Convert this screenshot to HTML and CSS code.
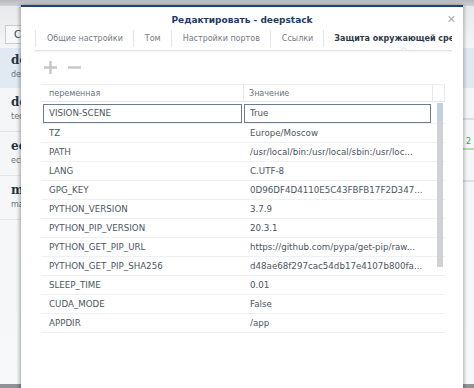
FILE: index.html
```html
<!DOCTYPE html>
<html lang="ru">

<head>
    <meta charset="UTF-8">
    <title>Редактировать - deepstack</title>
    <link rel="stylesheet" href="styles.css">
</head>

<body>
    <div class="desk">
        <div class="topbar"></div>
        <div class="desk-body">
            <div class="list">
                <div class="list-tools"><span class="btn">Создать</span></div>
                <div class="item selected"><b>deepstack</b><small>deepquestai/deepstack</small></div>
                <div class="item"><b>deepstack-gpu</b><small>tecnativa/docker</small></div>
                <div class="item"><b>eclipse</b><small>eclipse-mosquitto</small></div>
                <div class="item"><b>mariadb</b><small>mariadb:latest</small></div>
            </div>
            <div class="side">
                <div class="side-band"></div>
                <div class="side-row"></div>
                <div class="side-row green">2</div>
                <div class="side-row"></div>
            </div>
        </div>
        <div class="taskbar"></div>
    </div>

    <div class="modal">
        <div class="modal-head">
            <span class="modal-title">Редактировать - deepstack</span>
            <span class="close">&#x2715;</span>
        </div>

        <div class="tabs">
            <span class="tab">Общие настройки</span>
            <span class="tab">Том</span>
            <span class="tab">Настройки портов</span>
            <span class="tab">Ссылки</span>
            <span class="tab active">Защита окружающей среды</span>
            <span class="caret"></span>
        </div>

        <div class="toolbar">
            <svg width="15" height="15" viewBox="0 0 15 15"><path d="M7.5 1v13M1 7.5h13" stroke="#c3c7cc" stroke-width="2.4"/></svg>
            <svg width="15" height="15" viewBox="0 0 15 15"><path d="M1 7.5h13" stroke="#c3c7cc" stroke-width="2.4"/></svg>
        </div>

        <div class="grid">
            <div class="grid-head">
                <span>переменная</span>
                <span>Значение</span>
                <span></span>
            </div>
            <div class="grid-body">
                <div class="row edit">
                    <span class="cell"><span class="input">VISION-SCENE</span></span>
                    <span class="cell"><span class="input">True</span></span>
                </div>
                <div class="row"><span class="cell">TZ</span><span class="cell">Europe/Moscow</span></div>
                <div class="row"><span class="cell">PATH</span><span class="cell">/usr/local/bin:/usr/local/sbin:/usr/loc...</span></div>
                <div class="row"><span class="cell">LANG</span><span class="cell">C.UTF-8</span></div>
                <div class="row"><span class="cell">GPG_KEY</span><span class="cell">0D96DF4D4110E5C43FBFB17F2D347...</span></div>
                <div class="row"><span class="cell">PYTHON_VERSION</span><span class="cell">3.7.9</span></div>
                <div class="row"><span class="cell">PYTHON_PIP_VERSION</span><span class="cell">20.3.1</span></div>
                <div class="row"><span class="cell">PYTHON_GET_PIP_URL</span><span class="cell">https://github.com/pypa/get-pip/raw...</span></div>
                <div class="row"><span class="cell">PYTHON_GET_PIP_SHA256</span><span class="cell">d48ae68f297cac54db17e4107b800fa...</span></div>
                <div class="row"><span class="cell">SLEEP_TIME</span><span class="cell">0.01</span></div>
                <div class="row"><span class="cell">CUDA_MODE</span><span class="cell">False</span></div>
                <div class="row"><span class="cell">APPDIR</span><span class="cell">/app</span></div>
                <div class="scrollbar"><div class="thumb-top"></div></div>
            </div>
        </div>
    </div>
</body>

</html>
```

FILE: styles.css
```css
body {
    margin: 0;
    width: 474px;
    height: 388px;
    overflow: hidden;
    position: relative;
    font-family: "DejaVu Sans", Verdana, sans-serif;
    font-size: 8.7px;
    color: #4b5560;
    background-color: #f6f7f8;
}

.desk {
    height: 388px;
    display: flex;
    flex-direction: column;
}

.topbar {
    height: 6px;
    background: linear-gradient(#b7b9bc, #cfd1d3);
}

.desk-body {
    flex: 1;
    display: flex;
    justify-content: space-between;
    background: linear-gradient(#e8e9ea 0, #f4f5f6 40px, #f7f8f9 100%);
}

.taskbar {
    height: 4px;
    background-color: #8f9296;
}

/* list behind the dialog */
.list {
    width: 21px;
    overflow: hidden;
    white-space: nowrap;
}

.list-tools {
    height: 42px;
    padding: 19px 0 0 5px;
    box-sizing: border-box;
}

.btn {
    display: inline-block;
    border: 1px solid #c9cdd2;
    background-color: #f7f8f9;
    padding: 3px 8px;
    color: #3c4650;
    font-size: 10px;
}

.item {
    height: 44px;
    padding: 7px 0 0 11px;
    box-sizing: border-box;
    border-bottom: 1px solid #e2e4e6;
}

.item b {
    display: block;
    font-family: "DejaVu Serif", serif;
    font-size: 12px;
    color: #243447;
}

.item small {
    display: block;
    margin-top: 3px;
    font-size: 8px;
    color: #6b737c;
}

.item.selected {
    height: 40px;
    background-color: #e1e9f3;
    border-bottom: none;
    padding-top: 5px;
}

.side {
    width: 11px;
    padding-top: 42px;
}

.side-band {
    height: 40px;
    background-color: #dfe7f1;
}

.side-row {
    height: 30px;
    border-bottom: 2px solid #dcdfe2;
}

.side-row.green {
    height: 30px;
    padding: 17px 0 0 3px;
    color: #4a9a3c;
    font-size: 8px;
    border-bottom: 2px solid #b8dcae;
    box-sizing: border-box;
}

/* dialog */
.modal {
    position: absolute;
    left: 21px;
    top: 5px;
    width: 442px;
    height: 390px;
    background-color: #fff;
    border-top: 2px solid #26426e;
    box-shadow: -2px 0 3px rgba(0, 0, 0, 0.25), 2px 0 3px rgba(0, 0, 0, 0.2);
}

.modal-head {
    height: 22px;
    display: flex;
    align-items: center;
    justify-content: center;
    position: relative;
}

.modal-title {
    font-weight: bold;
    font-size: 9px;
    color: #1f3b63;
    margin-top: 3px;
}

.close {
    position: absolute;
    right: 7px;
    top: 6px;
    color: #a8adb3;
    font-size: 11px;
}

.tabs {
    margin: 0 11px 0 14px;
    height: 22px;
    display: flex;
    align-items: flex-start;
    padding-top: 1px;
    box-sizing: border-box;
    border-bottom: 1px solid #e1e4e8;
    box-shadow: 0 1px 1px rgba(0, 0, 0, 0.04);
    overflow: hidden;
    white-space: nowrap;
    position: relative;
    font-size: 8px;
}

.tab {
    padding: 0 10px 0 11px;
    border-left: 1px solid #e3e6e9;
    line-height: 17px;
    color: #737b84;
}

.tab.active {
    font-weight: bold;
    color: #2e3a48;
    padding-left: 10px;
}

.caret {
    position: absolute;
    left: 366px;
    bottom: -1px;
    width: 5px;
    height: 5px;
    background-color: #fff;
    border-left: 1px solid #e1e4e8;
    border-top: 1px solid #e1e4e8;
    transform: translateY(3px) rotate(45deg);
}

.toolbar {
    height: 33px;
    display: flex;
    align-items: center;
    gap: 9px;
    padding-left: 22px;
}

.grid {
    margin-left: 20px;
    width: 404px;
}

.grid-head {
    height: 16px;
    display: grid;
    grid-template-columns: 203px 189px 1fr;
    border-top: 1px solid #eceef0;
    border-bottom: 1px solid #e3e6e9;
    color: #66707a;
    font-size: 8px;
    line-height: 17px;
}

.grid-head span {
    padding-left: 8px;
    border-right: 1px solid #e6e8eb;
}

.grid-head span + span {
    padding-left: 5px;
}

.grid-body {
    position: relative;
    padding-top: 1px;
}

.row {
    height: 18px;
    display: grid;
    grid-template-columns: 203px 189px;
    border-bottom: 1px solid #eef0f2;
    line-height: 18px;
}

.cell {
    padding-left: 8px;
    white-space: nowrap;
    overflow: hidden;
}

.cell + .cell {
    padding-left: 6px;
}

.row.edit {
    height: 20px;
    border-bottom: 1px solid #eef0f2;
}

.row.edit .cell {
    padding: 1px 0 0 2px;
}

.row.edit .cell + .cell {
    padding-left: 0;
}

.input {
    display: block;
    height: 17px;
    line-height: 17px;
    border: 1px solid #6b7c92;
    padding-left: 5px;
    margin-right: 2px;
}

.scrollbar {
    position: absolute;
    left: 396px;
    top: 1px;
    width: 6px;
    height: 164px;
    background-color: #cfd1d4;
}

.thumb-top {
    height: 18px;
    background-color: #c3d0df;
}
```
